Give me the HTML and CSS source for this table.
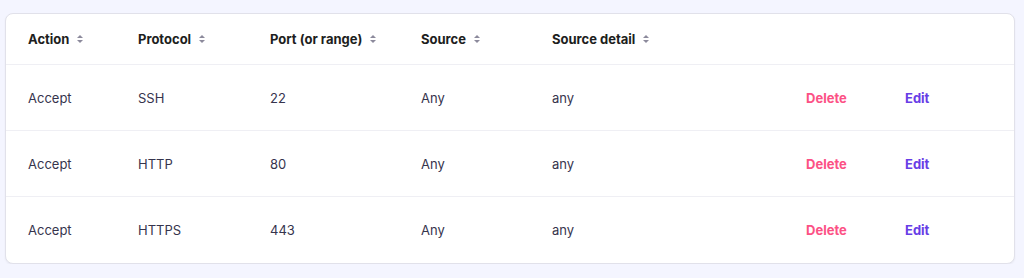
FILE: index.html
```html
<!DOCTYPE html>
<html lang="en">
<head>
<meta charset="utf-8">
<title>Firewall rules</title>
<link rel="stylesheet" href="styles.css">
</head>
<body>
<div class="page">
  <div class="card">
    <div class="row head">
      <div class="cell">Action <span class="sort"></span></div>
      <div class="cell">Protocol <span class="sort"></span></div>
      <div class="cell">Port (or range) <span class="sort"></span></div>
      <div class="cell">Source <span class="sort"></span></div>
      <div class="cell">Source detail <span class="sort"></span></div>
      <div class="cell"></div>
      <div class="cell"></div>
    </div>
    <div class="row">
      <div class="cell">Accept</div>
      <div class="cell">SSH</div>
      <div class="cell">22</div>
      <div class="cell">Any</div>
      <div class="cell">any</div>
      <div class="cell"><a class="link delete" href="#">Delete</a></div>
      <div class="cell"><a class="link edit" href="#">Edit</a></div>
    </div>
    <div class="row">
      <div class="cell">Accept</div>
      <div class="cell">HTTP</div>
      <div class="cell">80</div>
      <div class="cell">Any</div>
      <div class="cell">any</div>
      <div class="cell"><a class="link delete" href="#">Delete</a></div>
      <div class="cell"><a class="link edit" href="#">Edit</a></div>
    </div>
    <div class="row last">
      <div class="cell">Accept</div>
      <div class="cell">HTTPS</div>
      <div class="cell">443</div>
      <div class="cell">Any</div>
      <div class="cell">any</div>
      <div class="cell"><a class="link delete" href="#">Delete</a></div>
      <div class="cell"><a class="link edit" href="#">Edit</a></div>
    </div>
  </div>
</div>
</body>
</html>
```
FILE: styles.css
```css
* { box-sizing: border-box; }
html, body { margin: 0; padding: 0; }
body {
  background: #f4f5ff;
  font-family: Inter, "DejaVu Sans", sans-serif;
  font-size: 13px;
  color: #36344d;
}
.page {
  padding: 13px 9px 0 5px;
}
.card {
  background: #ffffff;
  border: 1px solid #e1e1ea;
  border-radius: 8px;
  box-shadow: 0 1px 2px rgba(29, 30, 32, 0.06);
  height: 251px;
  display: flex;
  flex-direction: column;
}
.row {
  display: grid;
  grid-template-columns: 110px 132px 151px 131px 254px 99px 1fr;
  padding-left: 22px;
  align-items: center;
  height: 66.5px;
  border-bottom: 1px solid #efeff4;
}
.row.last { border-bottom: none; }
.row.head {
  height: 52px;
  font-weight: 700;
  color: #1d1e20;
}
.cell {
  display: flex;
  align-items: center;
  white-space: nowrap;
}
.sort {
  display: inline-flex;
  flex-direction: column;
  gap: 2px;
  margin-left: 8px;
}
.sort::before, .sort::after {
  content: "";
  width: 0;
  height: 0;
  border-left: 3px solid transparent;
  border-right: 3px solid transparent;
}
.sort::before { border-bottom: 3.5px solid #8c8a9c; }
.sort::after { border-top: 3.5px solid #8c8a9c; }
.link {
  font-weight: 700;
  text-decoration: none;
}
.delete { color: #fc5185; }
.edit { color: #673de6; }
```
